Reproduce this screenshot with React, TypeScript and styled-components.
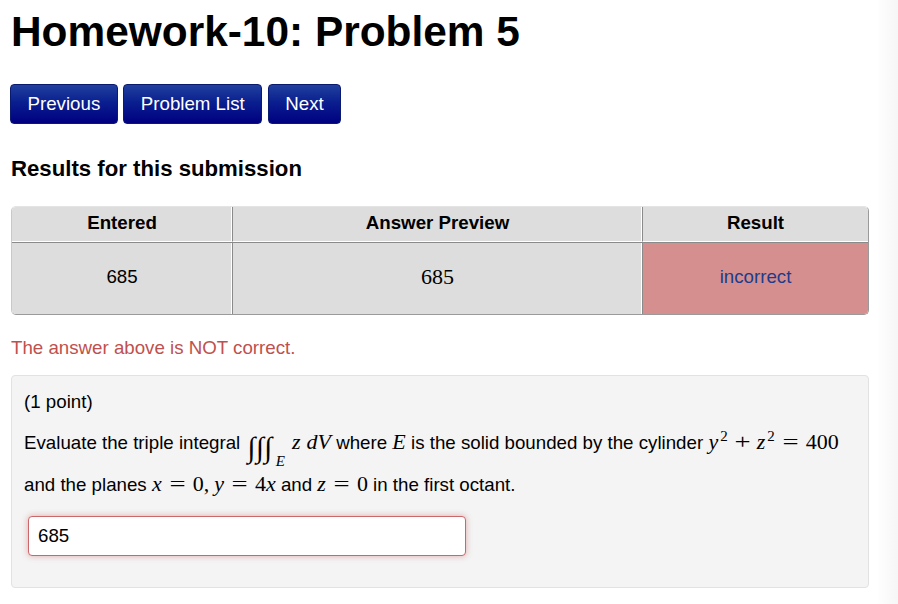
import React from 'react'
import styled, { createGlobalStyle } from 'styled-components'

const GlobalStyle = createGlobalStyle`
html, body {
  margin: 0;
  padding: 0;
}
body {
  font-family: "Liberation Sans", Arial, sans-serif;
  font-size: 18.72px;
  color: #000;
  background: linear-gradient(to right, #fff calc(100% - 22px), #f6f6f6 100%);
  min-height: 604px;
}
`

const App = () => {
  return (
    <>
      <GlobalStyle />
      <Page>
        <Title>Homework-10: Problem 5</Title>
        <Nav>
          <NavButton>Previous</NavButton>
          <NavButton>Problem List</NavButton>
          <NavButton>Next</NavButton>
        </Nav>
        <SubTitle>Results for this submission</SubTitle>
        <ResultsTable>
          <HeadCell>Entered</HeadCell>
          <HeadCell>Answer Preview</HeadCell>
          <HeadCell last>Result</HeadCell>
          <BodyCell>685</BodyCell>
          <BodyCell math>685</BodyCell>
          <BodyCell last bad>incorrect</BodyCell>
        </ResultsTable>
        <Message>The answer above is NOT correct.</Message>
        <ProblemBox>
          <Points>(1 point)</Points>
          <Statement>
            Evaluate the triple integral{' '}
            <Integral>
              <IntSigns>∫∫∫</IntSigns>
              <Sub>E</Sub>
            </Integral>
            <Mi>z</Mi>
            <Mi gap={6}>d</Mi>
            <Mi>V</Mi> where <Mi>E</Mi> is the solid bounded by the cylinder{' '}
            <Mi>y</Mi>
            <Sup>2</Sup>
            <Mo>+</Mo>
            <Mi>z</Mi>
            <Sup>2</Sup>
            <Mo rel>=</Mo>
            <Mn>400</Mn>
            <br />
            and the planes <Mi>x</Mi>
            <Mo rel>=</Mo>
            <Mn>0</Mn>
            <Mn>,</Mn>
            <Mi gap={5}>y</Mi>
            <Mo rel>=</Mo>
            <Mn>4</Mn>
            <Mi>x</Mi> and <Mi>z</Mi>
            <Mo rel>=</Mo>
            <Mn>0</Mn> in the first octant.
          </Statement>
          <AnswerInput defaultValue="685" />
        </ProblemBox>
      </Page>
    </>
  )
}

export default App

const Page = styled.div`
  padding: 7px 0 0 10px;
  width: 860px;
`

const Title = styled.h1`
  margin: 0 0 0 1px;
  font-size: 42.4px;
  font-weight: 700;
  line-height: 50px;
`

const Nav = styled.div`
  display: flex;
  gap: 5.5px;
  margin-top: 27px;
`

const NavButton = styled.button`
  height: 40px;
  padding: 0 16.5px;
  font-family: "Liberation Sans", Arial, sans-serif;
  font-size: 18.72px;
  color: #fff;
  background: linear-gradient(to bottom, #20409e 0%, #0a1f8f 45%, #000080 100%);
  border: 1px solid #0a1a70;
  border-radius: 4px;
  cursor: pointer;
`

const SubTitle = styled.h2`
  margin: 32px 0 0 1px;
  font-size: 22.2px;
  font-weight: 700;
  line-height: 25px;
`

const ResultsTable = styled.div`
  display: grid;
  grid-template-columns: 221px 410px 1fr;
  grid-template-rows: 35px 72px;
  margin: 25px 0 0 1px;
  width: 858px;
  box-sizing: border-box;
  border: 1px solid #9a9a9a;
  border-top-color: #e4e4e4;
  border-left-color: #c8c8c8;
  border-radius: 5px;
  overflow: hidden;
  background: #fff;
`

const HeadCell = styled.div<{ last?: boolean }>`
  display: flex;
  align-items: center;
  justify-content: center;
  background: #dddddd;
  font-weight: 700;
  border-bottom: 1px solid #fff;
  border-right: ${p => (p.last ? 'none' : '1px solid #8a8a8a')};
  box-shadow: ${p => (p.last ? 'none' : 'inset -1px 0 0 #fff')};
  padding-bottom: 2px;
`

const BodyCell = styled.div<{ last?: boolean; bad?: boolean; math?: boolean }>`
  display: flex;
  align-items: center;
  justify-content: center;
  background: ${p => (p.bad ? '#d58f8e' : '#dddddd')};
  color: ${p => (p.bad ? '#1d3b8c' : '#000')};
  border-top: 1px solid #8a8a8a;
  border-right: ${p => (p.last ? 'none' : '1px solid #8a8a8a')};
  box-shadow: ${p => (p.last ? 'none' : 'inset -1px 0 0 #fff')};
  font-family: ${p => (p.math ? '"Liberation Serif", "Times New Roman", serif' : 'inherit')};
  font-size: ${p => (p.math ? '22px' : 'inherit')};
  padding-bottom: 4px;
`

const Message = styled.div`
  margin: 22px 0 0 1px;
  color: #c0504d;
  line-height: 22px;
`

const ProblemBox = styled.div`
  margin: 16px 0 0 1px;
  width: 858px;
  box-sizing: border-box;
  padding: 5px 12px 31px;
  background: #f4f4f4;
  border: 1px solid #e2e2e2;
  border-radius: 4px;
`

const Points = styled.div`
  line-height: 41px;
`

const Statement = styled.div`
  line-height: 41.5px;
`

const Integral = styled.span`
  margin: 0 7px 0 2px;
  font-family: "Liberation Serif", "Times New Roman", serif;
  line-height: 0;
`

const IntSigns = styled.span`
  position: relative;
  top: 8px;
  font-size: 29px;
  letter-spacing: 0.5px;
  line-height: 0;
`

const Sub = styled.span`
  position: relative;
  top: 17px;
  font-style: italic;
  font-size: 15px;
  line-height: 0;
  margin-left: 3px;
`

const Mi = styled.span<{ gap?: number }>`
  font-family: "Liberation Serif", "Times New Roman", serif;
  font-style: italic;
  font-size: 22px;
  line-height: 0;
  margin-left: ${p => (p.gap ? `${p.gap}px` : '0')};
`

const Mn = styled.span`
  font-family: "Liberation Serif", "Times New Roman", serif;
  font-size: 22px;
  line-height: 0;
`

const Mo = styled.span<{ rel?: boolean }>`
  display: inline-block;
  width: 17px;
  text-align: center;
  font-family: "Liberation Serif", "Times New Roman", serif;
  font-size: 22px;
  line-height: 1;
  transform: scaleX(1.3);
  margin: ${p => (p.rel ? '0 7px' : '0 6px')};
`

const Sup = styled.sup`
  font-family: "Liberation Serif", "Times New Roman", serif;
  font-size: 15px;
  line-height: 0;
  vertical-align: 8px;
  margin-left: 2px;
`

const AnswerInput = styled.input`
  display: block;
  margin: 11px 0 0 4px;
  width: 438px;
  height: 40px;
  box-sizing: border-box;
  padding: 0 9px;
  font-family: "Liberation Sans", Arial, sans-serif;
  font-size: 18.72px;
  color: #000;
  background: #fff;
  border: 1px solid #c9676b;
  border-radius: 4px;
  box-shadow: 0 0 6px rgba(200, 80, 80, 0.45);
  outline: none;
`
